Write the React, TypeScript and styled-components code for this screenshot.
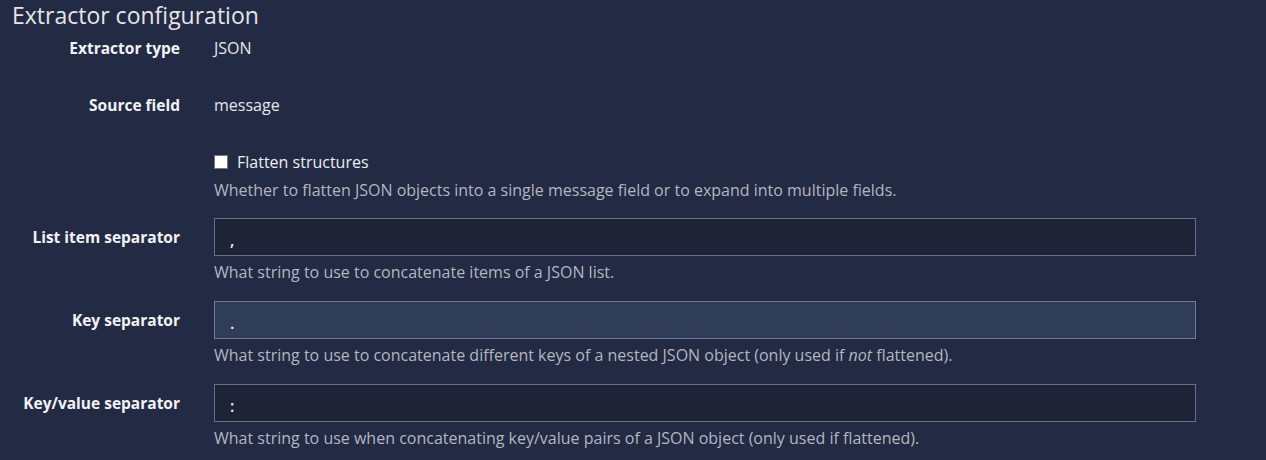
import React from 'react';
import styled, {createGlobalStyle} from 'styled-components';

const GlobalStyle = createGlobalStyle`
  html, body {
    margin: 0;
    padding: 0;
    background: #232a43;
  }
  body {
    font-family: "Open Sans", "Noto Sans", sans-serif;
    color: #e6e7ea;
  }
`

type Field = {
  label: string;
  value: string;
  help: React.ReactNode;
  hover?: boolean;
}

const fields: Field[] = [
  {label: 'List item separator', value: ',', help: 'What string to use to concatenate items of a JSON list.'},
  {
    label: 'Key separator',
    value: '.',
    hover: true,
    help: <>What string to use to concatenate different keys of a nested JSON object (only used if <em>not</em> flattened).</>,
  },
  {
    label: 'Key/value separator',
    value: ':',
    help: 'What string to use when concatenating key/value pairs of a JSON object (only used if flattened).',
  },
]

export default function App() {
  return (
    <>
      <GlobalStyle/>
      <Page>
        <Title>Extractor configuration</Title>
        <Form>
          <StaticRow>
            <Label>Extractor type</Label>
            <StaticValue>JSON</StaticValue>
          </StaticRow>
          <StaticRow>
            <Label>Source field</Label>
            <StaticValue>message</StaticValue>
          </StaticRow>
          <CheckboxRow>
            <span/>
            <div>
              <CheckboxLabel>
                <Box/>
                Flatten structures
              </CheckboxLabel>
              <Help>Whether to flatten JSON objects into a single message field or to expand into multiple fields.</Help>
            </div>
          </CheckboxRow>
          {fields.map((f) => (
            <InputRow key={f.label}>
              <Label>{f.label}</Label>
              <div>
                <TextInput $hover={f.hover} defaultValue={f.value} readOnly/>
                <Help>{f.help}</Help>
              </div>
            </InputRow>
          ))}
        </Form>
      </Page>
    </>
  );
}

const Page = styled.main`
  width: 1266px;
  height: 460px;
  overflow: hidden;
`

const Title = styled.h2`
  margin: 0 0 -2px 12px;
  font-family: "Open Sans", sans-serif;
  font-weight: 400;
  font-size: 23px;
  line-height: 31px;
  color: #e4e5ea;
`

const Form = styled.div`
  display: flex;
  flex-direction: column;
`

const Row = styled.div`
  display: grid;
  grid-template-columns: 180px 982px;
  column-gap: 34px;
  margin-bottom: 19px;
`

const StaticRow = styled(Row)`
  height: 38px;
  align-items: center;
`

const CheckboxRow = styled(Row)`
  padding-top: 7px;
  margin-bottom: 18px;
`

const InputRow = styled(Row)`
  align-items: start;
`

const Label = styled.label`
  text-align: right;
  font-weight: 700;
  font-size: 15.5px;
  line-height: 38px;
  color: #f2f3f5;
  white-space: nowrap;
`

const StaticValue = styled.span`
  font-size: 16px;
  color: #e6e7ea;
`

const CheckboxLabel = styled.label`
  display: flex;
  align-items: center;
  gap: 9px;
  font-size: 16px;
  line-height: 24px;
  color: #eceef1;
`

const Box = styled.span`
  width: 12px;
  height: 12px;
  background: #ffffff;
  border: 1px solid #767676;
`

const TextInput = styled.input<{$hover?: boolean}>`
  display: block;
  box-sizing: border-box;
  width: 982px;
  height: 38px;
  padding: 6px 15px 0;
  background: ${(p) => (p.$hover ? '#303d58' : '#1f2336')};
  border: 1px solid ${(p) => (p.$hover ? '#6f7a98' : '#666e88')};
  font-family: "Open Sans", "Noto Sans", sans-serif;
  font-size: 16px;
  font-weight: 600;
  color: #eceef1;
  outline: none;
`

const Help = styled.p`
  margin: 6px 0 0;
  font-size: 16px;
  line-height: 20px;
  color: #b3b6c0;
`
